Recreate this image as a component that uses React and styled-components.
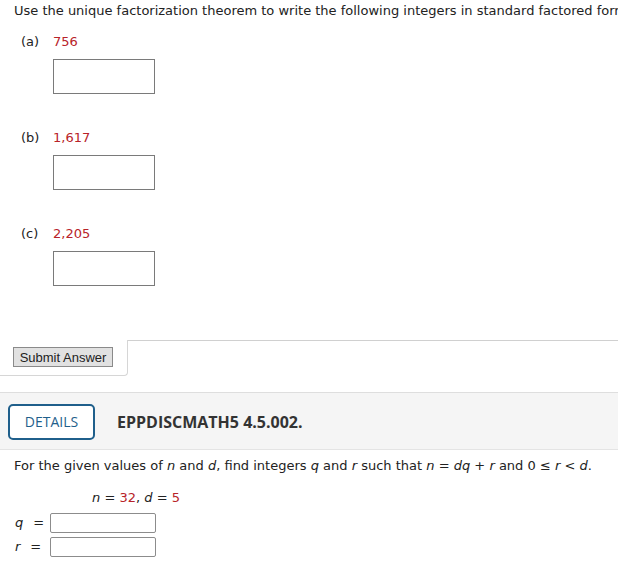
import styled, { createGlobalStyle } from "styled-components";

const GlobalStyle = createGlobalStyle`
  html, body {
    margin: 0;
    padding: 0;
    background: #fff;
  }
  body {
    font-family: "DejaVu Sans", Verdana, sans-serif;
    font-size: 13px;
    color: #222;
    overflow: hidden;
  }
`;

const Page = styled.div`
  width: 618px;
  height: 575px;
  overflow: hidden;
`;

const Question = styled.div`
  padding: 3px 0 0 14px;
`;

const Prompt = styled.div`
  line-height: 16px;
  white-space: nowrap;
  overflow: hidden;
`;

const Part = styled.div`
  margin-top: ${(p) => p.$top}px;
`;

const PartLabel = styled.div`
  display: flex;
  line-height: 16px;
  padding-left: 7px;
`;

const Letter = styled.span`
  width: 32px;
`;

const Value = styled.span`
  color: #b82329;
`;

const AnswerBox = styled.div`
  margin: 9px 0 0 39px;
  width: 100px;
  height: 33px;
  border: 1px solid #7a7a7a;
  background: #fff;
`;

const SubmitRow = styled.div`
  display: flex;
  margin-top: 54px;
  height: 36px;
`;

const SubmitCell = styled.div`
  width: 128px;
  box-sizing: border-box;
  border-right: 1px solid #d6d6d6;
  border-bottom: 1px solid #d6d6d6;
  border-bottom-right-radius: 4px;
  padding: 7px 0 0 13px;
`;

const SubmitButton = styled.button`
  font-family: "Liberation Sans", Arial, sans-serif;
  font-size: 13px;
  color: #222;
  width: 100px;
  height: 20px;
  padding: 0;
  background: #e1e1e1;
  border: 1px solid #8a8a8a;
  border-radius: 0;
`;

const Filler = styled.div`
  flex: 1;
  border-top: 1px solid #d0d0d0;
`;

const DetailsBar = styled.div`
  margin-top: 16px;
  border-top: 1px solid #dedede;
  border-bottom: 1px solid #e4e4e4;
  background: #f5f5f5;
  height: 56px;
  display: flex;
  align-items: center;
  padding-left: 8px;
  gap: 22px;
  font-family: "Open Sans", sans-serif;
`;

const DetailsButton = styled.div`
  width: 83px;
  height: 32px;
  border: 2px solid #1f5f8b;
  border-radius: 5px;
  background: #fff;
  color: #1f5f8b;
  font-size: 14px;
  display: flex;
  align-items: center;
  justify-content: center;
  margin-top: 1px;
`;

const Title = styled.div`
  font-size: 16px;
  font-weight: 700;
  color: #333;
  margin-top: 1px;
`;

const Question2 = styled.div`
  padding: 8px 0 0 14px;
`;

const Line = styled.div`
  line-height: 16px;
  white-space: nowrap;
`;

const Var = styled.i`
  font-style: italic;
`;

const Given = styled.div`
  line-height: 16px;
  margin: 16px 0 0 78px;
  white-space: nowrap;
`;

const Fields = styled.div`
  margin-top: 7px;
  display: grid;
  grid-template-columns: 36px 106px;
  row-gap: 4px;
  align-items: center;
`;

const FieldLabel = styled.div`
  display: flex;
  gap: 10px;
  padding-left: 1px;
  line-height: 16px;
`;

const SmallBox = styled.div`
  width: 104px;
  height: 18px;
  border: 1px solid #8c8c8c;
  border-radius: 2px;
  background: #fff;
`;

const parts = [
  { letter: "(a)", value: "756" },
  { letter: "(b)", value: "1,617" },
  { letter: "(c)", value: "2,205" },
];

export default function App() {
  return (
    <Page>
      <GlobalStyle />
      <Question>
        <Prompt>
          Use the unique factorization theorem to write the following integers in standard factored form.
        </Prompt>
        {parts.map((part, i) => (
          <Part key={part.letter} $top={i === 0 ? 15 : 36}>
            <PartLabel>
              <Letter>{part.letter}</Letter>
              <Value>{part.value}</Value>
            </PartLabel>
            <AnswerBox />
          </Part>
        ))}
      </Question>
      <SubmitRow>
        <SubmitCell>
          <SubmitButton>Submit Answer</SubmitButton>
        </SubmitCell>
        <Filler />
      </SubmitRow>
      <DetailsBar>
        <DetailsButton>DETAILS</DetailsButton>
        <Title>EPPDISCMATH5 4.5.002.</Title>
      </DetailsBar>
      <Question2>
        <Line>
          For the given values of <Var>n</Var> and <Var>d</Var>, find integers <Var>q</Var> and <Var>r</Var> such that{" "}
          <Var>n</Var> = <Var>dq</Var> + <Var>r</Var> and 0 ≤ <Var>r</Var> &lt; <Var>d</Var>.
        </Line>
        <Given>
          <Var>n</Var> = <Value>32</Value>, <Var>d</Var> = <Value>5</Value>
        </Given>
        <Fields>
          <FieldLabel>
            <Var>q</Var>
            <span>=</span>
          </FieldLabel>
          <SmallBox />
          <FieldLabel>
            <Var>r</Var>
            <span>=</span>
          </FieldLabel>
          <SmallBox />
        </Fields>
      </Question2>
    </Page>
  );
}
